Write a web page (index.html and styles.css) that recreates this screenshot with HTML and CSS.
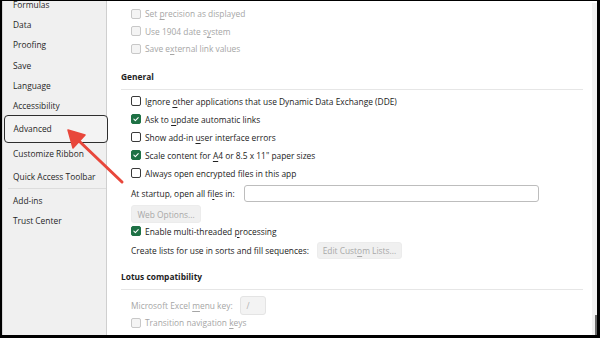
FILE: index.html
```html
<!DOCTYPE html>
<html>
<head>
<meta charset="utf-8">
<link rel="stylesheet" href="styles.css">
</head>
<body>
<div class="frame">
  <nav class="sidebar">
    <div class="nav-item first">Formulas</div>
    <div class="nav-item">Data</div>
    <div class="nav-item">Proofing</div>
    <div class="nav-item">Save</div>
    <div class="nav-item">Language</div>
    <div class="nav-item">Accessibility</div>
    <div class="nav-item selected">Advanced</div>
    <div class="nav-item custom">Customize Ribbon</div>
    <div class="nav-item quick">Quick Access Toolbar</div>
    <div class="nav-sep"></div>
    <div class="nav-item addins">Add-ins</div>
    <div class="nav-item trust">Trust Center</div>
  </nav>
  <main class="content">
    <div class="options">
      <div class="group top">
        <div class="row tight disabled"><span class="cb"></span><span>Set <u>p</u>recision as displayed</span></div>
        <div class="row tight disabled"><span class="cb"></span><span>Use 1904 date s<u>y</u>stem</span></div>
        <div class="row tight disabled"><span class="cb"></span><span>Save e<u>x</u>ternal link values</span></div>
      </div>
      <h2 class="heading general">General</h2>
      <div class="sep"></div>
      <div class="group general-rows">
        <div class="row"><span class="cb"></span><span>Ignore <u>o</u>ther applications that use Dynamic Data Exchange (DDE)</span></div>
        <div class="row"><span class="cb checked"><svg viewBox="0 0 10 10"><path d="M2.3 5.2 L4.2 7 L7.8 3.2"/></svg></span><span>Ask to <u>u</u>pdate automatic links</span></div>
        <div class="row"><span class="cb"></span><span>Show add-in <u>u</u>ser interface errors</span></div>
        <div class="row"><span class="cb checked"><svg viewBox="0 0 10 10"><path d="M2.3 5.2 L4.2 7 L7.8 3.2"/></svg></span><span>Scale content for <u>A</u>4 or 8.5 x 11" paper sizes</span></div>
        <div class="row"><span class="cb"></span><span>Always open encrypted files in this app</span></div>
      </div>
      <div class="field-row startup">
        <span class="label">At startup, open all fi<u>l</u>es in:</span>
        <span class="input wide"></span>
      </div>
      <div class="btn web">Web Options...</div>
      <div class="row enable"><span class="cb checked"><svg viewBox="0 0 10 10"><path d="M2.3 5.2 L4.2 7 L7.8 3.2"/></svg></span><span>Enable multi-threaded <u>p</u>rocessing</span></div>
      <div class="field-row lists">
        <span class="label">Create lists for use in sorts and fill sequences:</span>
        <span class="btn edit">Edit Cust<u>o</u>m Lists...</span>
      </div>
      <h2 class="heading lotus">Lotus compatibility</h2>
      <div class="sep"></div>
      <div class="field-row menukey disabled">
        <span class="label">Microsoft Excel <u>m</u>enu key:</span>
        <span class="input key">/</span>
      </div>
      <div class="row transition disabled"><span class="cb"></span><span>Transition navigation <u>k</u>eys</span></div>
    </div>
    <div class="scrollbar"><div class="thumb"></div></div>
  </main>
  <svg class="arrow" viewBox="0 0 600 338" width="600" height="338">
    <line x1="122" y1="182" x2="78" y2="140" stroke="#e8473b" stroke-width="3" stroke-linecap="round"/>
    <polygon points="68,130 85,135 73,148" fill="#e8473b" stroke="#e8473b" stroke-width="1.5" stroke-linejoin="round"/>
  </svg>
</div>
</body>
</html>
```
FILE: styles.css
```css
* { box-sizing: border-box; margin: 0; padding: 0; }
html, body { width: 600px; height: 338px; overflow: hidden; background: #000; }
body {
  font-family: "Open Sans", "Noto Sans", sans-serif;
  font-size: 8.4px;
  color: #222;
}
.frame {
  position: relative;
  width: 600px;
  height: 338px;
  border-style: solid;
  border-color: #000;
  border-width: 1px 3px 3px 2px;
  display: flex;
  background: #fff;
  overflow: hidden;
}
.sidebar {
  width: 105px;
  flex: none;
  background: #f0f0f0;
  border-left: 1px solid #d6d6d6;
  border-right: 1px solid #cfcfcf;
  display: flex;
  flex-direction: column;
}
.nav-item {
  height: 20.33px;
  display: flex;
  align-items: center;
  padding-left: 10px;
  color: #262626;
  white-space: nowrap;
}
.nav-item.first { margin-top: -7px; }
.nav-item.selected {
  margin: -1px -2px 0 1px;
  height: 28px;
  border: 1.5px solid #2e2e2e;
  border-radius: 4px;
  padding-left: 8.5px;
  background: #f3f3f3;
}
.nav-item.custom { height: 21px; }
.nav-item.quick { margin-top: 2px; height: 21px; }
.nav-sep { height: 1px; background: #dcdcdc; margin: 1px 0 0 5px; }
.nav-item.addins { margin-top: 1px; height: 21px; }
.nav-item.trust { height: 20px; }

.content {
  flex: 1;
  display: flex;
  min-width: 0;
}
.options {
  flex: 1;
  padding: 4px 9px 0 14px;
  display: flex;
  flex-direction: column;
}
.scrollbar {
  width: 5px;
  flex: none;
  margin-top: 2px;
  background: #f1f1f1;
  display: flex;
  flex-direction: column;
  justify-content: flex-end;
  align-items: flex-end;
}
.thumb { width: 2px; height: 20px; background: #6a6a6a; }

.row {
  height: 18px;
  display: flex;
  align-items: center;
  gap: 4px;
  padding-left: 10px;
  white-space: nowrap;
}
.row.tight { height: 17.5px; }
.disabled { color: #a6a6a6; }
.cb {
  width: 10px;
  height: 10px;
  flex: none;
  border: 1px solid #3a3a3a;
  border-radius: 2px;
  background: #fff;
  display: flex;
}
.disabled .cb { border-color: #c8c8c8; background: #f4f4f4; }
.cb.checked { background: #1e7145; border-color: #1e7145; }
.cb svg { width: 8px; height: 8px; }
.cb svg path { fill: none; stroke: #fff; stroke-width: 1.3; stroke-linecap: round; stroke-linejoin: round; }
u { text-decoration-thickness: 0.6px; text-underline-offset: 1.5px; }

.heading {
  font-size: 8.4px;
  font-weight: 700;
  color: #1e1e1e;
  line-height: 16px;
  height: 16px;
}
.heading.general { margin-top: 11.5px; }
.heading.lotus { margin-top: 10px; }
.sep { height: 1px; background: #e6e6e6; margin-top: 4px; }
.general-rows { margin-top: 2px; }

.field-row {
  display: flex;
  align-items: center;
  padding-left: 10px;
  white-space: nowrap;
}
.label { flex: none; }
.startup { margin-top: 3px; height: 17px; gap: 9px; }
.input {
  border: 1px solid #bdbdbd;
  border-radius: 3px;
  background: #fff;
}
.input.wide { width: 295px; height: 17px; }
.btn {
  background: #f0f0f0;
  border: 1px solid #ececec;
  border-radius: 3px;
  color: #a8a8a8;
  display: flex;
  align-items: center;
  justify-content: center;
  white-space: nowrap;
}
.btn.web { margin: 3px 0 0 10px; width: 70px; height: 18px; }
.enable { margin-top: -1px; }
.lists { margin-top: 2px; height: 17px; gap: 8px; }
.btn.edit { width: 85px; height: 17px; }
.menukey { margin-top: 6px; height: 19px; gap: 7px; }
.input.key {
  width: 26px;
  height: 19px;
  background: #f3f3f3;
  border-color: #e4e4e4;
  padding-left: 6px;
  display: flex;
  align-items: center;
  color: #b0b0b0;
}
.transition { margin-top: -1.5px; }

.arrow {
  position: absolute;
  left: -2px;
  top: -1px;
  pointer-events: none;
}
```
